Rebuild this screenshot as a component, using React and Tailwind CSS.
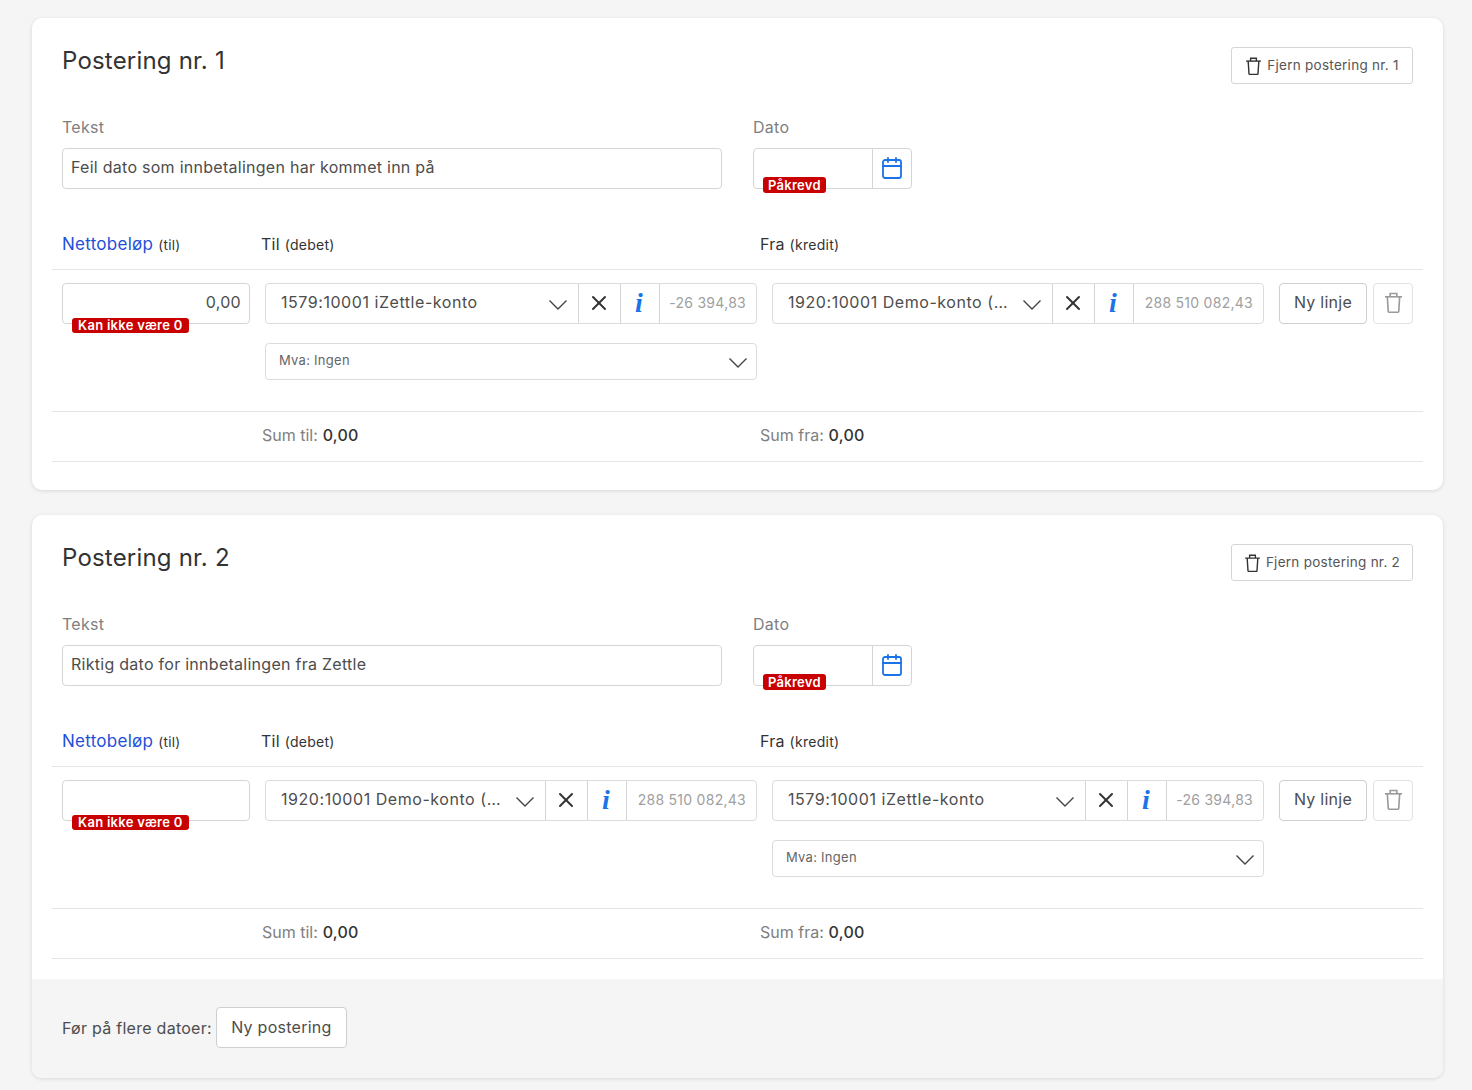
import { X, Calendar } from "lucide-react";

function Chevron() {
  return (
    <svg viewBox="0 0 18 10" fill="none" stroke="#444" strokeWidth="1.4" className="mt-[3px] h-[10px] w-[18px] shrink-0">
      <path d="M0.5 0.5 9 9 17.5 0.5" />
    </svg>
  );
}

function TrashIcon({ className }) {
  return (
    <svg viewBox="0 0 20 22" fill="none" stroke="currentColor" strokeWidth="1.7" className={className}>
      <path d="M1 5h18" />
      <path d="M6.5 5V1.5h7V5" />
      <path d="M3.5 5l1 15.5a1 1 0 0 0 1 .7h9a1 1 0 0 0 1-.7l1-15.5" />
    </svg>
  );
}

function AccountSelect({ name, amount, amountWidth, vat }) {
  return (
    <div>
      <div className="flex h-[41px] rounded border border-[#dcdcdc] bg-white">
        <div className="flex min-w-0 flex-1 items-center justify-between gap-[13px] pl-[15px] pr-[11px]">
          <span className="truncate pb-[3px] text-[16px] tracking-[0.55px] text-[#4d4d4d]">{name}</span>
          <Chevron />
        </div>
        <div className="flex w-[42px] items-center justify-center border-l border-[#d5d5d5]">
          <X className="h-[24px] w-[24px] -translate-x-px -translate-y-px text-[#333]" strokeWidth={2} />
        </div>
        <div className="flex w-[39px] items-center justify-center border-l border-[#d5d5d5]">
          <span className="-translate-x-px -translate-y-px font-['Liberation_Serif',serif] text-[28px] font-bold italic leading-none text-[#1a73e8]">i</span>
        </div>
        <div className={`flex items-center justify-end border-l border-[#d5d5d5] pb-[2px] pr-[10px] text-[14px] text-[#a0a0a0] ${amountWidth}`}>
          {amount}
        </div>
      </div>
      {vat && (
        <div className="mt-[19px] flex h-[37px] items-center justify-between rounded border border-[#dcdcdc] bg-white pl-[13px] pr-[9px]">
          <span className="pb-[2px] text-[13px] text-[#666]">Mva: Ingen</span>
          <Chevron />
        </div>
      )}
    </div>
  );
}

function Posting({ nr, text, amount, left, right, footer }) {
  return (
    <section className={`mb-[25px] rounded-[10px] bg-white shadow-[0_1px_4px_rgba(0,0,0,0.12)] ${footer ? "overflow-hidden" : ""}`}>
      <div className={`px-5 pt-[29px] ${footer ? "pb-5" : "pb-[28px]"}`}>
        <div className="flex items-start justify-between px-2.5">
          <h2 className="text-[24px] leading-[28px] tracking-[0.2px] text-[#333]">Postering nr. {nr}</h2>
          <button className="flex h-[37px] w-[182px] items-center justify-center gap-[5px] rounded-[3px] border border-[#d5d5d5] text-[13.5px] text-[#555]">
            <TrashIcon className="h-[18px] w-[17px] text-[#333]" />
            <span className="pb-px">Fjern postering nr. {nr}</span>
          </button>
        </div>

        <div className="mt-[31px] flex gap-[31px] px-2.5">
          <div className="w-[660px]">
            <label className="block text-[16px] leading-6 text-[#808080]">Tekst</label>
            <div className="mt-[9px] flex h-[41px] items-center rounded border border-[#d5d5d5] px-2 pb-[3px] text-[16px] text-[#4d4d4d]">
              {text}
            </div>
          </div>
          <div className="w-[159px]">
            <label className="block text-[16px] leading-6 text-[#808080]">Dato</label>
            <div className="relative mt-[9px] flex h-[41px] rounded border border-[#d5d5d5]">
              <div className="flex-1" />
              <div className="flex w-[39px] items-center justify-center border-l border-[#d5d5d5]">
                <Calendar className="h-6 w-6 -translate-y-px text-[#1a73e8]" strokeWidth={1.8} />
              </div>
              <span className="absolute left-[9px] top-[28px] rounded-[3px] bg-[#c80000] px-[5px] text-[13px] font-semibold leading-[16px] text-white">
                Påkrevd
              </span>
            </div>
          </div>
        </div>

        <div className="mt-[45px] flex h-[36px] items-start border-b border-[#e5e5e5] pl-2.5 text-[#333]">
          <div className="w-[199px] text-[17px] leading-[20px]">
            <span className="text-[#1f4fd8]">Nettobeløp</span> <span className="text-[13.5px]">(til)</span>
          </div>
          <div className="w-[499px] text-[16px] leading-[20px]">
            Til <span className="text-[14px]">(debet)</span>
          </div>
          <div className="text-[16px] leading-[20px]">
            Fra <span className="text-[14px]">(kredit)</span>
          </div>
        </div>

        <div className="flex gap-[15px] border-b border-[#e5e5e5] px-2.5 pb-[31px] pt-[13px]">
          <div className="relative flex h-[41px] w-[188px] items-center justify-end rounded border border-[#d5d5d5] px-2 pb-[3px] text-[16px] text-[#4d4d4d]">
            {amount}
            <span className="absolute left-[9px] top-[34px] rounded-[3px] bg-[#c80000] px-[6px] text-[13px] font-semibold leading-[15px] text-white">
              Kan ikke være 0
            </span>
          </div>
          <div className="w-[492px]"><AccountSelect {...left} /></div>
          <div className="w-[492px]"><AccountSelect {...right} /></div>
          <div className="flex gap-[6px]">
            <button className="h-[41px] w-[88px] rounded border border-[#cfcfcf] pb-[3px] text-[16px] text-[#4d4d4d]">Ny linje</button>
            <button className="flex h-[41px] w-[40px] items-center justify-center rounded border border-[#e2e2e2]">
              <TrashIcon className="h-[21px] w-[19px] -translate-y-px text-[#9a9a9a]" />
            </button>
          </div>
        </div>

        <div className="flex h-[50px] items-center border-b border-[#e5e5e5] pb-[4px] pl-[210px] text-[16px]">
          <div className="w-[498px]"><span className="tracking-normal text-[#808080]">Sum til:</span> <span className="font-medium text-[#333]">0,00</span></div>
          <div><span className="tracking-normal text-[#808080]">Sum fra:</span> <span className="font-medium text-[#333]">0,00</span></div>
        </div>
      </div>

      {footer && (
        <div className="flex h-[99px] items-center gap-[4px] bg-[#f5f5f5] px-[30px] pb-[2px] text-[16px] text-[#4d4d4d]">
          Før på flere datoer:
          <button className="h-[41px] w-[131px] rounded border border-[#cfcfcf] bg-white pb-[2px] text-[#4d4d4d]">Ny postering</button>
        </div>
      )}
    </section>
  );
}

const izettle = { name: "1579:10001 iZettle-konto", amount: "-26 394,83" };
const demo = { name: "1920:10001 Demo-konto (Bank)", amount: "288 510 082,43" };

export default function App() {
  return (
    <main className="min-h-[1090px] overflow-hidden bg-[#f5f5f5] px-[32px] pt-[18px] font-['Inter','Noto_Sans',sans-serif] tracking-[0.27px]">
      <div className="w-[1411px]">
        <Posting
          nr={1}
          text="Feil dato som innbetalingen har kommet inn på"
          amount="0,00"
          left={{ ...izettle, amountWidth: "w-[97px]", vat: true }}
          right={{ ...demo, amountWidth: "w-[130px]" }}
        />
        <Posting
          nr={2}
          text="Riktig dato for innbetalingen fra Zettle"
          amount=""
          left={{ ...demo, amountWidth: "w-[130px]" }}
          right={{ ...izettle, amountWidth: "w-[97px]", vat: true }}
          footer
        />
      </div>
    </main>
  );
}
